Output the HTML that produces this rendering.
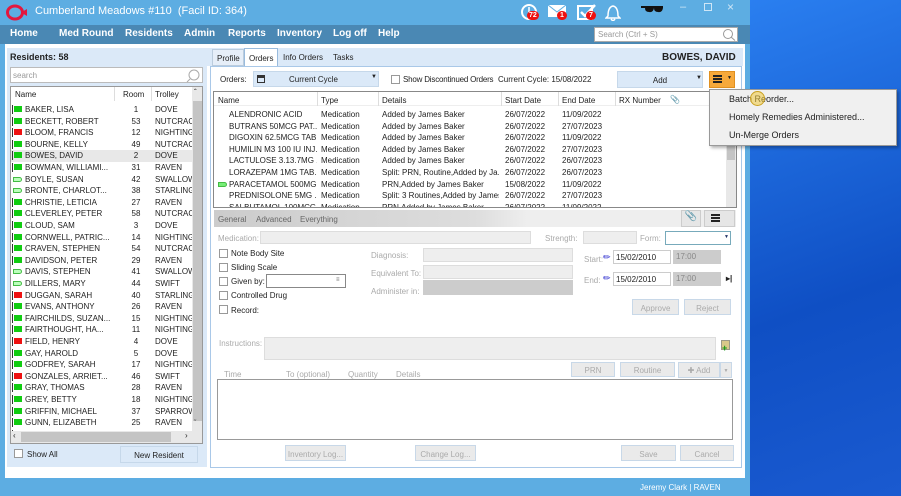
<!DOCTYPE html>
<html><head><meta charset="utf-8"><style>
*{box-sizing:border-box;margin:0;padding:0}
body{width:901px;height:496px;overflow:hidden;font-family:"Liberation Sans",sans-serif;font-size:8px;color:#222;position:relative;background:#1c63d6}
.a{position:absolute;white-space:nowrap}
.desk{left:750px;top:0;width:151px;height:496px;background:linear-gradient(160deg,#2a7ff0,#0f4fc4 60%,#1a5ad0)}
.win{left:0;top:0;width:750px;height:496px;background:#5dade2}
.menu{left:0;top:25px;width:750px;height:19px;background:#4a88b4}
.menu span{position:absolute;top:3px;color:#fff;font-weight:bold;font-size:10px}
.body{left:5px;top:44px;width:740px;height:434px;background:#fff}
.row{position:absolute;left:0;height:12px;font-size:8px}
.flag{position:absolute;width:8px;height:6px;top:2px;left:3px;background:#1c1}
.flag:before{content:"";position:absolute;left:-2px;top:-1px;width:1px;height:9px;background:#333}
.lbl{color:#aaa;font-size:8px}
.fld{background:#eee;border:1px solid #ddd}
.btn{border:1px solid #c8d8e8;background:#eaeaea;color:#aaa;text-align:center;font-size:8px}
.cb{width:9px;height:9px;border:1px solid #999;background:#fff}
.clip{overflow:hidden;text-overflow:clip}
</style></head><body>
<div class="a desk"></div>
<div class="a win"></div>
<svg class="a" style="left:5px;top:4px" width="22" height="17"><ellipse cx="10" cy="8.5" rx="7.5" ry="6.5" fill="none" stroke="#e3173e" stroke-width="3"/><path d="M16 8.5 L22 5 L22 12Z" fill="#e3173e"/></svg>
<div class="a" style="left:35px;top:5px;font-size:11px;color:#fff">Cumberland Meadows #110&nbsp; (Facil ID: 364)</div>
<svg class="a" style="left:520px;top:3px" width="22" height="20"><circle cx="9" cy="9" r="7" fill="none" stroke="#fff" stroke-width="2"/><path d="M9 4v5h4" stroke="#fff" stroke-width="1.5" fill="none"/></svg>
<div class="a" style="left:527px;top:11px;background:#e11;color:#fff;border-radius:6px;font-size:7px;padding:1px 2px;font-weight:bold">72</div>
<svg class="a" style="left:548px;top:5px" width="20" height="14"><rect x="0" y="0" width="18" height="12" fill="#fff"/><path d="M0 0 L9 7 L18 0" stroke="#5dade2" fill="none"/></svg>
<div class="a" style="left:557px;top:11px;background:#e11;color:#fff;border-radius:6px;font-size:7px;padding:1px 3px;font-weight:bold">1</div>
<svg class="a" style="left:577px;top:3px" width="22" height="18"><rect x="1" y="3" width="14" height="13" fill="none" stroke="#fff" stroke-width="2"/><path d="M4 9 L8 13 L18 2" stroke="#fff" stroke-width="2.5" fill="none"/></svg>
<div class="a" style="left:586px;top:11px;background:#e11;color:#fff;border-radius:6px;font-size:7px;padding:1px 3px;font-weight:bold">7</div>
<svg class="a" style="left:605px;top:3px" width="16" height="18"><path d="M3 13 Q3 4 8 3 Q13 4 13 13 L15 15 L1 15Z M6 16 Q8 19 10 16" fill="none" stroke="#fff" stroke-width="1.5"/></svg>
<svg class="a" style="left:641px;top:5px" width="22" height="8"><path d="M0 1 H22 V3 H13 Q12 8 8 7 Q4 7 4 3 H0Z M12 1 H22 V3 Q21 8 17 7 Q13 7 13 3Z" fill="#111"/></svg>
<div class="a" style="left:680px;top:1px;color:#cfe6f6;font-size:11px">&#8211;</div>
<div class="a" style="left:704px;top:3px;width:8px;height:8px;border:1px solid #cfe6f6"></div>
<div class="a" style="left:727px;top:0px;color:#cfe6f6;font-size:12px">&#215;</div>
<div class="a menu">
<span style="left:10px">Home</span><span style="left:59px">Med Round</span><span style="left:125px">Residents</span><span style="left:184px">Admin</span><span style="left:228px">Reports</span><span style="left:277px">Inventory</span><span style="left:333px">Log off</span><span style="left:378px">Help</span>
</div>
<div class="a" style="left:594px;top:27px;width:144px;height:15px;background:#fff;border:1px solid #aaa;color:#999;font-size:8px;padding:2px 3px">Search (Ctrl + S)</div>
<svg class="a" style="left:722px;top:28px" width="14" height="13"><circle cx="6" cy="6" r="4.5" fill="none" stroke="#999"/><path d="M9 9 L13 12.5" stroke="#999"/></svg>
<div class="a body"></div>
<div class="a" style="left:7px;top:48px;width:200px;height:419px;background:#dbe9f8"></div>
<div class="a" style="left:10px;top:52px;font-weight:bold;font-size:9px">Residents: 58</div>
<div class="a" style="left:10px;top:67px;width:193px;height:16px;background:#fff;border:1px solid #bbb;color:#999;padding:3px 2px">search</div>
<svg class="a" style="left:186px;top:68px" width="16" height="15"><circle cx="8" cy="7" r="5" fill="none" stroke="#aaa"/><path d="M4 11 L1 14" stroke="#aaa"/></svg>
<div class="a" style="left:10px;top:86px;width:193px;height:358px;background:#fff;border:1px solid #999;overflow:hidden">
<div class="a" style="left:4px;top:3px">Name</div><div class="a" style="left:112px;top:3px">Room</div><div class="a" style="left:144px;top:3px">Trolley</div>
<div class="a" style="left:103px;top:0;width:1px;height:14px;background:#ddd"></div><div class="a" style="left:140px;top:0;width:1px;height:14px;background:#ddd"></div>
<div id="rl"></div>
<div class="a" style="left:181px;top:0;width:11px;height:346px;background:#e8e8e8"></div>
<div class="a" style="left:182px;top:14px;width:9px;height:320px;background:#c4c4c4"></div>
<div class="a" style="left:183px;top:1px;font-size:8px">&#710;</div>
<div class="a" style="left:183px;top:333px;font-size:7px">&#711;</div>
<div class="a" style="left:0;top:344px;width:192px;height:13px;background:#e8e8e8"></div>
<div class="a" style="left:10px;top:345px;width:150px;height:10px;background:#c4c4c4"></div>
<div class="a" style="left:2px;top:344px">&#8249;</div><div class="a" style="left:174px;top:344px">&#8250;</div>
</div>
<div class="a cb" style="left:14px;top:449px"></div>
<div class="a" style="left:27px;top:450px">Show All</div>
<div class="a" style="left:120px;top:446px;width:78px;height:17px;background:#dbe9f8;border:1px solid #c6d8ea;text-align:center;padding-top:4px">New Resident</div>

<div class="a" style="left:207px;top:48px;width:536px;height:18px;background:#dbe9f8"></div>
<div class="a" style="left:212px;top:49px;width:32px;height:17px;border:1px solid #bcd;background:#e6eef8;padding:4px 4px">Profile</div>
<div class="a" style="left:244px;top:48px;width:34px;height:19px;border:1px solid #9bd;border-bottom:none;background:#fff;padding:5px 4px">Orders</div>
<div class="a" style="left:283px;top:53px">Info Orders</div>
<div class="a" style="left:333px;top:53px">Tasks</div>
<div class="a" style="left:662px;top:52px;font-weight:bold;font-size:10px">BOWES, DAVID</div>
<div class="a" style="left:210px;top:66px;width:532px;height:402px;border:1px solid #a9c8e8;background:#fff"></div>
<div class="a" style="left:220px;top:75px">Orders:</div>
<div class="a" style="left:253px;top:71px;width:126px;height:16px;background:#dbe9f8;border:1px solid #c6d8ea"></div>
<div class="a" style="left:257px;top:75px;width:8px;height:8px;border:1.5px solid #333;border-top-width:3px"></div>
<div class="a" style="left:289px;top:75px">Current Cycle</div><div class="a" style="left:371px;top:74px;font-size:6px">&#9660;</div>
<div class="a cb" style="left:391px;top:75px"></div>
<div class="a" style="left:403px;top:75px;letter-spacing:-0.2px">Show Discontinued Orders</div>
<div class="a" style="left:498px;top:75px">Current Cycle: 15/08/2022</div>
<div class="a" style="left:617px;top:71px;width:86px;height:17px;background:#dbe9f8;border:1px solid #c6d8ea;text-align:center;padding-top:4px">Add</div><div class="a" style="left:696px;top:75px;font-size:6px">&#9660;</div>
<div class="a" style="left:709px;top:71px;width:26px;height:17px;background:#f7a93b;border:1px solid #e09020"></div>
<div class="a" style="left:713px;top:75px;width:9px;height:8px;border-top:2px solid #222;border-bottom:2px solid #222"></div><div class="a" style="left:713px;top:78px;width:9px;height:2px;background:#222"></div><div class="a" style="left:727px;top:75px;font-size:5px">&#9660;</div>
<div class="a" style="left:213px;top:91px;width:524px;height:117px;border:1px solid #888;background:#fff;overflow:hidden">
<div class="a" style="left:0;top:0;width:522px;height:14px;border-bottom:1px solid #eee"></div>
<div class="a" style="left:4px;top:4px">Name</div><div class="a" style="left:107px;top:4px">Type</div><div class="a" style="left:168px;top:4px">Details</div><div class="a" style="left:291px;top:4px">Start Date</div><div class="a" style="left:348px;top:4px">End Date</div><div class="a" style="left:405px;top:4px">RX Number</div><div class="a" style="left:456px;top:3px">&#128206;</div>
<div class="a" style="left:103px;top:0;width:1px;height:14px;background:#ddd"></div><div class="a" style="left:164px;top:0;width:1px;height:14px;background:#ddd"></div><div class="a" style="left:287px;top:0;width:1px;height:14px;background:#ddd"></div><div class="a" style="left:344px;top:0;width:1px;height:14px;background:#ddd"></div><div class="a" style="left:401px;top:0;width:1px;height:14px;background:#ddd"></div>
<div id="gl"></div>
<div class="a" style="left:512px;top:14px;width:10px;height:102px;background:#e8e8e8"></div><div class="a" style="left:513px;top:18px;width:8px;height:50px;background:#c4c4c4"></div>
</div>
<div class="a" style="left:709px;top:89px;width:188px;height:57px;background:#f0f0f0;border:1px solid #999;box-shadow:2px 2px 3px rgba(0,0,0,.3)"></div>
<div class="a" style="left:729px;top:94px;font-size:9px">Batch Reorder...</div>
<div class="a" style="left:729px;top:112px;font-size:9px">Homely Remedies Administered...</div>
<div class="a" style="left:729px;top:130px;font-size:9px">Un-Merge Orders</div>
<div class="a" style="left:750px;top:91px;width:15px;height:15px;border-radius:50%;background:rgba(240,200,60,.55);border:1px solid #c9a020"></div>
<div class="a" style="left:214px;top:210px;width:522px;height:17px;background:linear-gradient(90deg,#ccc,#ddd 50%,#eee 60%,#eee)"></div>
<div class="a" style="left:218px;top:215px;color:#666">General</div><div class="a" style="left:256px;top:215px;color:#666">Advanced</div><div class="a" style="left:300px;top:215px;color:#666">Everything</div>
<div class="a" style="left:681px;top:210px;width:20px;height:17px;background:#e6e6e6;border:1px solid #ccc;text-align:center;font-size:10px">&#128206;</div>
<div class="a" style="left:704px;top:210px;width:31px;height:17px;background:#e6e6e6;border:1px solid #ccc"></div>
<div class="a" style="left:711px;top:214px;width:9px;height:8px;border-top:2px solid #222;border-bottom:2px solid #222"></div><div class="a" style="left:711px;top:217px;width:9px;height:2px;background:#222"></div>
<div class="a lbl" style="left:218px;top:234px">Medication:</div><div class="a fld" style="left:260px;top:231px;width:271px;height:13px"></div>
<div class="a lbl" style="left:545px;top:234px">Strength:</div><div class="a fld" style="left:583px;top:231px;width:54px;height:13px"></div>
<div class="a lbl" style="left:640px;top:234px">Form:</div><div class="a" style="left:665px;top:231px;width:66px;height:14px;border:1px solid #7ab;background:#fff"></div><div class="a" style="left:724px;top:234px;font-size:5px;color:#236">&#9660;</div>
<div class="a cb" style="left:219px;top:249px"></div><div class="a" style="left:231px;top:249px">Note Body Site</div>
<div class="a cb" style="left:219px;top:263px"></div><div class="a" style="left:231px;top:263px">Sliding Scale</div>
<div class="a cb" style="left:219px;top:277px"></div><div class="a" style="left:231px;top:277px">Given by:</div>
<div class="a" style="left:266px;top:274px;width:80px;height:14px;border:1px solid #888;background:#fff"></div><div class="a" style="left:336px;top:277px;font-size:6px;color:#666">&#8801;</div>
<div class="a cb" style="left:219px;top:291px"></div><div class="a" style="left:231px;top:291px">Controlled Drug</div>
<div class="a cb" style="left:219px;top:305px"></div><div class="a" style="left:231px;top:306px">Record:</div>
<div class="a lbl" style="left:371px;top:251px">Diagnosis:</div><div class="a fld" style="left:423px;top:248px;width:150px;height:14px"></div>
<div class="a lbl" style="left:371px;top:269px">Equivalent To:</div><div class="a fld" style="left:423px;top:265px;width:150px;height:14px"></div>
<div class="a lbl" style="left:371px;top:287px">Administer in:</div><div class="a" style="left:423px;top:280px;width:150px;height:15px;background:#ccc;border:1px solid #ccc"></div>
<div class="a lbl" style="left:584px;top:255px">Start:</div><div class="a" style="left:603px;top:252px;color:#22c;font-size:9px">&#9999;</div>
<div class="a" style="left:613px;top:250px;width:58px;height:14px;border:1px solid #ccc;padding:2px 2px">15/02/2010</div>
<div class="a" style="left:673px;top:250px;width:48px;height:14px;background:#ccc;padding:2px 3px;color:#888">17:00</div>
<div class="a lbl" style="left:584px;top:276px">End:</div><div class="a" style="left:603px;top:273px;color:#22c;font-size:9px">&#9999;</div>
<div class="a" style="left:613px;top:272px;width:58px;height:14px;border:1px solid #ccc;padding:2px 2px">15/02/2010</div>
<div class="a" style="left:673px;top:272px;width:48px;height:14px;background:#ccc;padding:2px 3px;color:#888">17:00</div>
<div class="a" style="left:726px;top:274px;font-weight:bold;font-size:8px">&#9656;|</div>
<div class="a btn" style="left:632px;top:299px;width:47px;height:16px;padding-top:4px">Approve</div>
<div class="a btn" style="left:684px;top:299px;width:47px;height:16px;padding-top:4px">Reject</div>
<div class="a lbl" style="left:219px;top:339px">Instructions:</div><div class="a fld" style="left:264px;top:337px;width:452px;height:23px"></div>
<div class="a" style="left:721px;top:340px;width:9px;height:10px;background:#d8c88a;border:1px solid #998"></div><div class="a" style="left:722px;top:343px;color:#191;font-weight:bold;font-size:9px">+</div>
<div class="a lbl" style="left:224px;top:370px">Time</div><div class="a lbl" style="left:286px;top:370px">To (optional)</div><div class="a lbl" style="left:348px;top:370px">Quantity</div><div class="a lbl" style="left:396px;top:370px">Details</div>
<div class="a btn" style="left:571px;top:362px;width:44px;height:15px;padding-top:3px">PRN</div>
<div class="a btn" style="left:620px;top:362px;width:55px;height:15px;padding-top:3px">Routine</div>
<div class="a btn" style="left:678px;top:362px;width:42px;height:16px;padding-top:3px">&#10010; Add</div>
<div class="a btn" style="left:720px;top:362px;width:12px;height:16px;font-size:5px;padding-top:5px">&#9660;</div>
<div class="a" style="left:217px;top:379px;width:516px;height:61px;border:1px solid #999;background:#fff"></div>
<div class="a btn" style="left:285px;top:445px;width:61px;height:16px;padding-top:4px">Inventory Log...</div>
<div class="a btn" style="left:415px;top:445px;width:61px;height:16px;padding-top:4px">Change Log...</div>
<div class="a btn" style="left:621px;top:445px;width:55px;height:16px;padding-top:4px">Save</div>
<div class="a btn" style="left:680px;top:445px;width:54px;height:16px;padding-top:4px">Cancel</div>
<div class="a" style="left:640px;top:483px;color:#fff;font-size:8px">Jeremy Clark | RAVEN</div>
<script>
var R=[["BAKER, LISA",1,"DOVE","g"],["BECKETT, ROBERT",53,"NUTCRACK","g"],["BLOOM, FRANCIS",12,"NIGHTING.","r"],["BOURNE, KELLY",49,"NUTCRACK","g"],["BOWES, DAVID",2,"DOVE","g"],["BOWMAN, WILLIAMI...",31,"RAVEN","g"],["BOYLE, SUSAN",42,"SWALLOW","p"],["BRONTE, CHARLOT...",38,"STARLING","p"],["CHRISTIE, LETICIA",27,"RAVEN","g"],["CLEVERLEY, PETER",58,"NUTCRACK","g"],["CLOUD, SAM",3,"DOVE","g"],["CORNWELL, PATRIC...",14,"NIGHTING.","g"],["CRAVEN, STEPHEN",54,"NUTCRACK","g"],["DAVIDSON, PETER",29,"RAVEN","g"],["DAVIS, STEPHEN",41,"SWALLOW","p"],["DILLERS, MARY",44,"SWIFT","p"],["DUGGAN, SARAH",40,"STARLING","r"],["EVANS, ANTHONY",26,"RAVEN","g"],["FAIRCHILDS, SUZAN...",15,"NIGHTING.","g"],["FAIRTHOUGHT, HA...",11,"NIGHTING.","g"],["FIELD, HENRY",4,"DOVE","r"],["GAY, HAROLD",5,"DOVE","g"],["GODFREY, SARAH",17,"NIGHTING.","g"],["GONZALES, ARRIET...",46,"SWIFT","r"],["GRAY, THOMAS",28,"RAVEN","g"],["GREY, BETTY",18,"NIGHTING.","g"],["GRIFFIN, MICHAEL",37,"SPARROW","g"],["GUNN, ELIZABETH",25,"RAVEN","g"],["GUNSTON, KELLY",6,"DOVE","g"]];
var h="";R.forEach(function(r,i){var t=17+i*11.6;var bg=i==4?"background:#e8e8e8;":"";var f=r[3]=="p"?'<div style="position:absolute;left:2px;top:3px;width:9px;height:5px;border:1px solid #4b4;border-radius:0 3px 3px 0;background:#bfb"></div>':'<div class="flag" style="background:'+(r[3]=="r"?"#e11":"#1c1")+'"></div>';
h+='<div class="row" style="top:'+t+'px;width:181px;'+bg+'">'+f+'<span class="a" style="left:14px;top:1px">'+r[0]+'</span><span class="a" style="left:120px;top:1px;width:10px;text-align:center">'+r[1]+'</span><span class="a" style="left:144px;top:1px">'+r[2]+'</span></div>';});
document.getElementById("rl").outerHTML=h;
var G=[["ALENDRONIC ACID","Added by James Baker","26/07/2022","11/09/2022"],["BUTRANS 50MCG PAT...","Added by James Baker","26/07/2022","27/07/2023"],["DIGOXIN 62.5MCG TAB...","Added by James Baker","26/07/2022","11/09/2022"],["HUMILIN M3 100 IU INJ...","Added by James Baker","26/07/2022","27/07/2023"],["LACTULOSE 3.13.7MG ...","Added by James Baker","26/07/2022","26/07/2023"],["LORAZEPAM 1MG TAB...","Split: PRN, Routine,Added by Ja...","26/07/2022","26/07/2023"],["PARACETAMOL 500MG...","PRN,Added by James Baker","15/08/2022","11/09/2022"],["PREDNISOLONE 5MG ...","Split: 3 Routines,Added by James...","26/07/2022","27/07/2023"],["SALBUTAMOL 100MCG ...","PRN,Added by James Baker","26/07/2022","11/09/2022"]];
h="";G.forEach(function(r,i){var t=17+i*11.6;var f=i==6?'<div style="position:absolute;left:4px;top:3px;width:9px;height:5px;border:1px solid #4b4;border-radius:0 3px 3px 0;background:#7e7"></div>':"";
h+='<div class="row" style="top:'+t+'px;width:510px">'+f+'<span class="a clip" style="left:15px;top:1px;width:88px">'+r[0]+'</span><span class="a" style="left:107px;top:1px">Medication</span><span class="a clip" style="left:168px;top:1px;width:117px">'+r[1]+'</span><span class="a" style="left:291px;top:1px">'+r[2]+'</span><span class="a" style="left:348px;top:1px">'+r[3]+'</span></div>';});
document.getElementById("gl").outerHTML=h;
</script>
</body></html>
